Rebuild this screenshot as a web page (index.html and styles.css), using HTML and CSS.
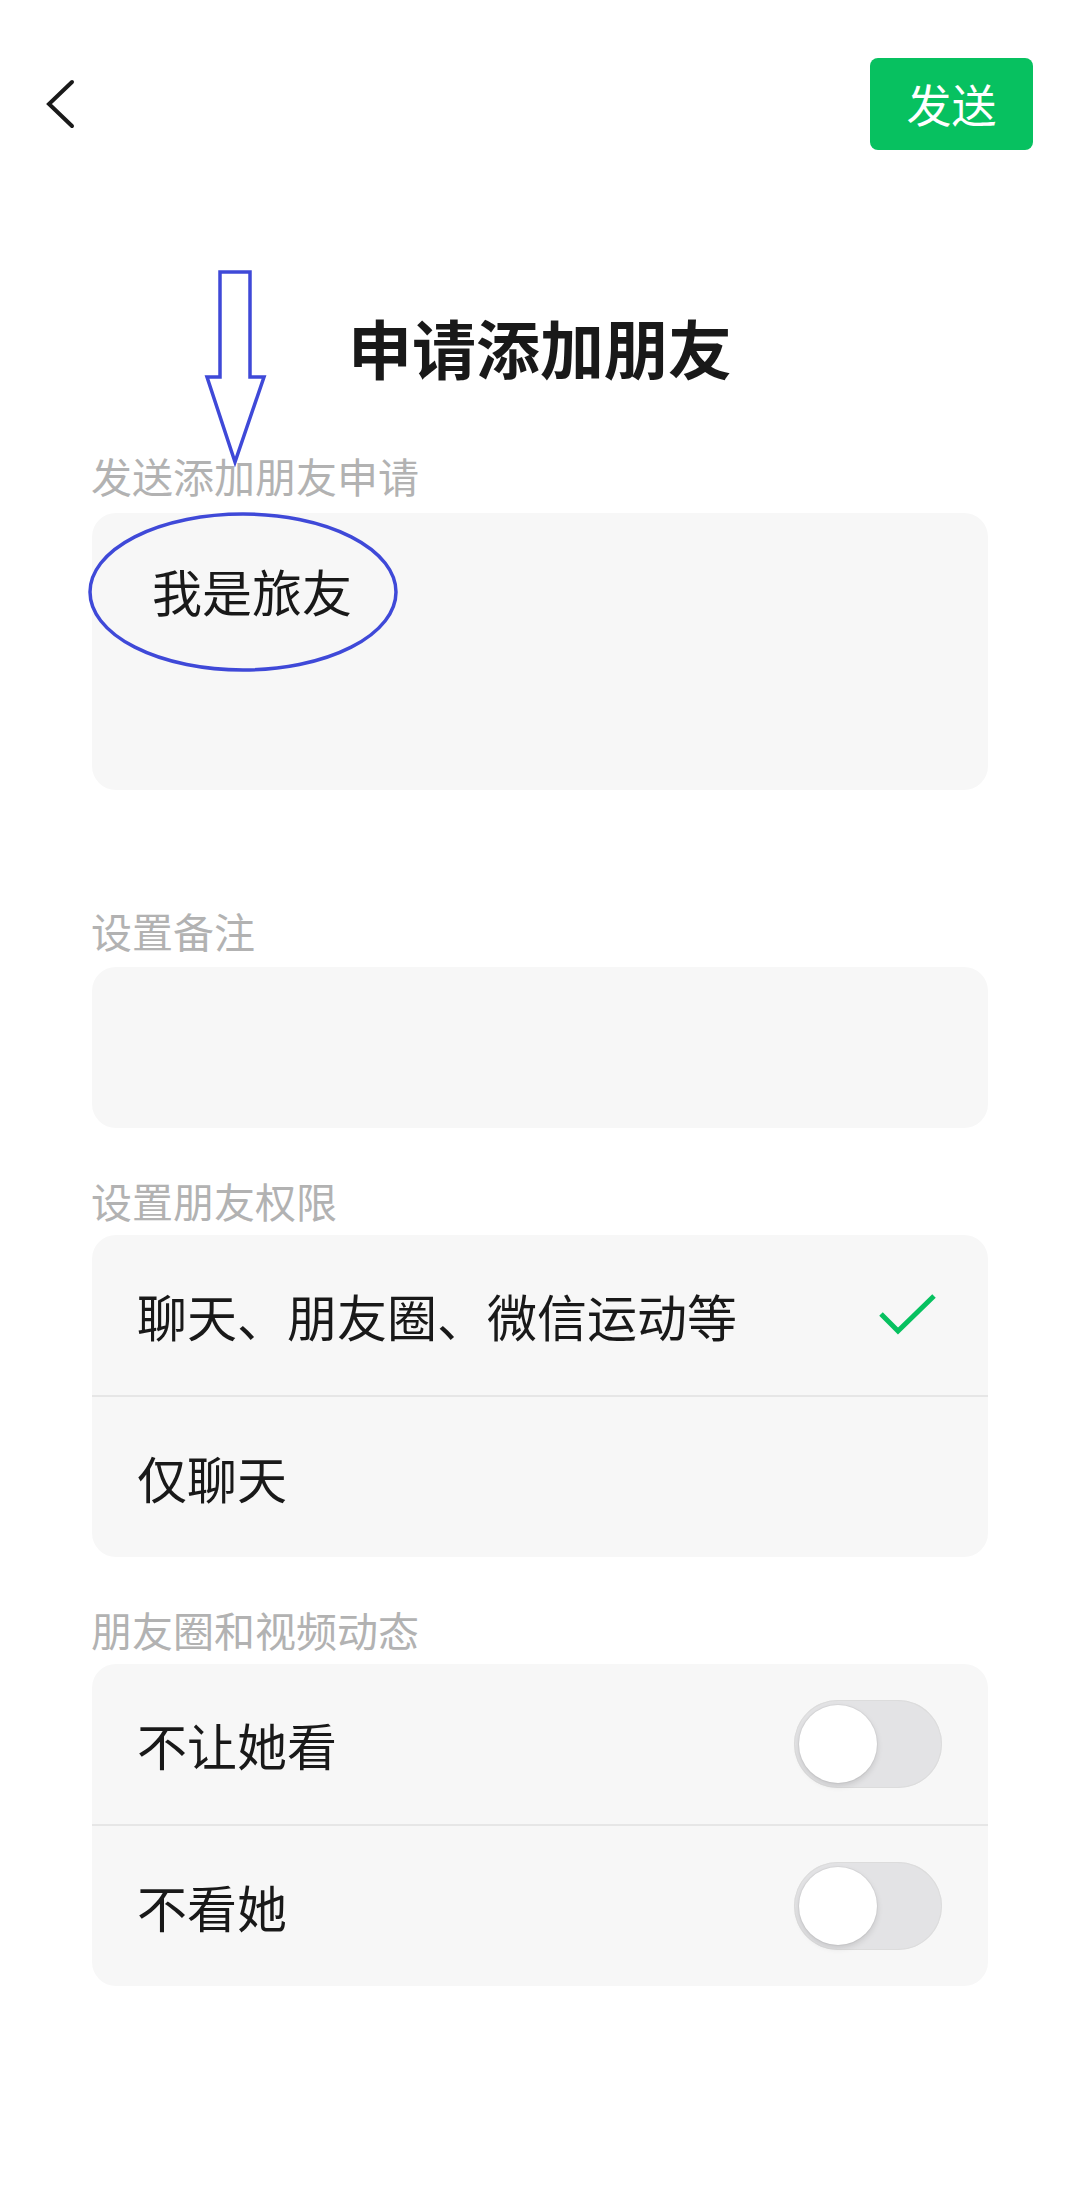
FILE: index.html
```html
<!DOCTYPE html>
<html lang="zh-CN">
<head>
<meta charset="utf-8">
<title>申请添加朋友</title>
<link rel="stylesheet" href="styles.css">
</head>
<body>
<div class="page">
  <header class="topbar">
    <svg class="back" width="40" height="60" viewBox="0 0 40 60">
      <polyline points="32,8 9,30 32,52" fill="none" stroke="#1a1a1a" stroke-width="4" stroke-linecap="round" stroke-linejoin="miter"/>
    </svg>
    <div class="send-btn">发送</div>
  </header>

  <h1 class="title">申请添加朋友</h1>

  <div class="label label-first">发送添加朋友申请</div>
  <div class="card card-msg">
    <div class="msg-text">我是旅友</div>
  </div>

  <div class="label label-remark">设置备注</div>
  <div class="card card-remark"></div>

  <div class="label label-sect">设置朋友权限</div>
  <div class="card">
    <div class="row">
      <span class="row-text">聊天、朋友圈、微信运动等</span>
      <svg class="check" width="60" height="44" viewBox="0 0 60 44">
        <polyline points="3,21 20,38 56,3" fill="none" stroke="#07c160" stroke-width="5" stroke-linecap="butt" stroke-linejoin="miter"/>
      </svg>
    </div>
    <div class="divider"></div>
    <div class="row">
      <span class="row-text">仅聊天</span>
    </div>
  </div>

  <div class="label label-sect">朋友圈和视频动态</div>
  <div class="card">
    <div class="row">
      <span class="row-text">不让她看</span>
      <div class="toggle"><div class="knob"></div></div>
    </div>
    <div class="divider"></div>
    <div class="row">
      <span class="row-text">不看她</span>
      <div class="toggle"><div class="knob"></div></div>
    </div>
  </div>

  <svg class="annot" width="1080" height="2202" viewBox="0 0 1080 2202">
    <path d="M220,272 L250,272 L250,377 L264,377 L235,462 L207,377 L220,377 Z" fill="none" stroke="#3f49d8" stroke-width="3.5" stroke-linejoin="miter"/>
    <ellipse cx="243" cy="592" rx="153" ry="78" fill="none" stroke="#3f49d8" stroke-width="3.5"/>
  </svg>
</div>
</body>
</html>
```

FILE: styles.css
```css
* {
  box-sizing: border-box;
}

html, body {
  margin: 0;
  padding: 0;
  background: #ffffff;
}

body {
  font-family: "Noto Sans CJK SC", "Noto Sans", sans-serif;
  color: #191919;
}

.page {
  position: relative;
  width: 1080px;
  min-height: 2202px;
  background: #ffffff;
  overflow: hidden;
}

.topbar {
  display: flex;
  align-items: center;
  justify-content: space-between;
  padding: 58px 47px 0 40px;
  height: 150px;
}

.back {
  display: block;
}

.send-btn {
  width: 163px;
  height: 92px;
  border-radius: 8px;
  background: #07c160;
  color: #ffffff;
  font-size: 45px;
  line-height: 92px;
  text-align: center;
}

.title {
  margin: 156px 0 0 0;
  height: 80px;
  font-size: 64px;
  line-height: 80px;
  font-weight: 700;
  text-align: center;
  color: #191919;
}

.label {
  margin: 0 90px 0 91px;
  height: 56px;
  font-size: 41px;
  line-height: 56px;
  color: #b2b2b2;
}

.label-first {
  margin-top: 61px;
  margin-bottom: 10px;
}

.label-remark {
  margin-top: 112px;
  margin-bottom: 9px;
}

.label-sect {
  margin-top: 44px;
  margin-bottom: 7px;
}

.card {
  margin: 0 92px 0 92px;
  background: #f7f7f7;
  border-radius: 24px;
  overflow: hidden;
}

.card-msg {
  height: 277px;
  padding: 42px 0 0 60px;
}

.msg-text {
  font-size: 50px;
  line-height: 70px;
  color: #191919;
}

.card-remark {
  height: 161px;
}

.row {
  display: flex;
  align-items: center;
  justify-content: space-between;
  height: 160px;
  padding: 0 46px 0 45px;
}

.row-text {
  font-size: 50px;
  line-height: 70px;
  color: #191919;
}

.check {
  display: block;
  margin-right: 4px;
}

.divider {
  height: 2px;
  background: #e6e6e6;
}

.toggle {
  position: relative;
  width: 148px;
  height: 88px;
  border-radius: 44px;
  background: #e3e3e5;
  box-shadow: inset 0 0 0 1px #dcdcdc;
}

.knob {
  position: absolute;
  left: 5px;
  top: 5px;
  width: 78px;
  height: 78px;
  border-radius: 50%;
  background: #ffffff;
  box-shadow: 0 3px 6px rgba(0, 0, 0, 0.13), 0 0 0 1px rgba(0, 0, 0, 0.04);
}

.annot {
  position: absolute;
  left: 0;
  top: 0;
  pointer-events: none;
}
```
